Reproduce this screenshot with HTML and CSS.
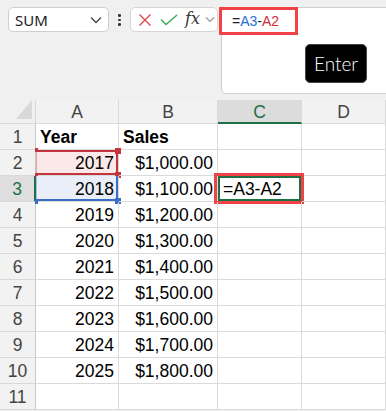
FILE: index.html
```html
<!DOCTYPE html>
<html lang="en">
<head>
  <meta charset="UTF-8" />
  <title>Formula bar</title>
  <link rel="stylesheet" href="styles.css">
</head>
<body>
  <header class="toolbar">
    <div class="name-box">
      <span>SUM</span>
      <svg width="12" height="8" viewBox="0 0 12 8"><path d="M1 1.5 L6 6.5 L11 1.5" fill="none" stroke="#444" stroke-width="1.3"/></svg>
    </div>
    <div class="dots"><i></i><i></i><i></i></div>
    <div class="fx-box">
      <svg width="14" height="14" viewBox="0 0 14 14"><path d="M1.5 1.5 L12.5 12.5 M12.5 1.5 L1.5 12.5" stroke="#e2474b" stroke-width="1.4"/></svg>
      <svg width="18" height="12" viewBox="0 0 18 12"><path d="M1 5.5 L6 10.5 L17 1" fill="none" stroke="#3fa857" stroke-width="1.5"/></svg>
      <span class="fx">fx</span>
      <svg width="10" height="7" viewBox="0 0 10 7"><path d="M1 1.5 L5 5.5 L9 1.5" fill="none" stroke="#999" stroke-width="1.2"/></svg>
    </div>
    <div class="formula-bar">
      <div class="formula">=<span class="ref-blue">A3</span>-<span class="ref-red">A2</span></div>
      <div class="enter">Enter</div>
      <div class="callout"></div>
    </div>
  </header>

  <section class="sheet">
    <div class="corner"></div>
    <div class="col-head">A</div>
    <div class="col-head">B</div>
    <div class="col-head active">C</div>
    <div class="col-head">D</div>
  </section>

  <script>
    const rows = [
      ['Year', 'Sales'],
      ['2017', '$1,000.00'],
      ['2018', '$1,100.00'],
      ['2019', '$1,200.00'],
      ['2020', '$1,300.00'],
      ['2021', '$1,400.00'],
      ['2022', '$1,500.00'],
      ['2023', '$1,600.00'],
      ['2024', '$1,700.00'],
      ['2025', '$1,800.00'],
      ['', '']
    ];

    const sheet = document.querySelector('.sheet');

    rows.forEach((row, i) => {
      const n = i + 1;
      const head = n === 1 ? 'cell bold' : 'cell num';
      let html = `<div class="row-head${n === 3 ? ' active' : ''}">${n}</div>`;
      let aClass = head;
      if (n === 2) aClass += ' ref-a2';
      if (n === 3) aClass += ' ref-a3';
      html += `<div class="${aClass}">${row[0]}${n === 2 || n === 3 ? '<b class="h tl"></b><b class="h tr"></b><b class="h bl"></b><b class="h br"></b>' : ''}</div>`;
      html += `<div class="${head}">${row[1]}</div>`;
      html += n === 3
        ? '<div class="cell current">=A3-A2<div class="callout"></div></div>'
        : '<div class="cell"></div>';
      html += '<div class="cell"></div>';
      sheet.insertAdjacentHTML('beforeend', html);
    });
  </script>
</body>
</html>
```

FILE: styles.css
```css
body {
  margin: 0;
  background-color: #f0f0f0;
  font-family: 'Liberation Sans', Arial, sans-serif;
  overflow: hidden;
}

.toolbar {
  display: flex;
  align-items: flex-start;
  height: 100px;
  padding: 7px 0 0 8px;
  box-sizing: border-box;
}

.name-box {
  display: flex;
  align-items: center;
  justify-content: space-between;
  width: 101px;
  height: 25px;
  padding: 0 6px 0 6px;
  box-sizing: border-box;
  background: white;
  border: 1px solid #cfcfcf;
  border-radius: 5px;
  font-family: 'Noto Sans', sans-serif;
  font-size: 15px;
  color: #222;
}

.dots {
  display: flex;
  flex-direction: column;
  gap: 2px;
  width: 21px;
  align-items: center;
  padding-top: 7px;
}

.dots i {
  width: 2.5px;
  height: 2.5px;
  background: #333;
  border-radius: 50%;
}

.fx-box {
  display: flex;
  align-items: center;
  gap: 8px;
  width: 88px;
  height: 25px;
  padding-left: 7px;
  box-sizing: border-box;
  background: white;
  border: 1px solid #d6d6d6;
  border-radius: 5px;
}

.fx {
  font-family: 'DejaVu Serif', 'Liberation Serif', serif;
  font-style: italic;
  font-size: 16px;
  color: #333;
  margin: -2px -3px 0 -1px;
}

.formula-bar {
  position: relative;
  flex: 1;
  height: 85px;
  margin-left: 3px;
  margin-right: -8px;
  background: white;
  border: 1px solid #cfcfcf;
  border-radius: 5px;
  display: flex;
  flex-direction: column;
}

.formula {
  padding: 5px 0 0 10px;
  font-size: 14px;
  color: #222;
  height: 31px;
  box-sizing: border-box;
}

.ref-blue { color: #1f6fd6; }
.ref-red { color: #d22c3c; }

.enter {
  align-self: flex-start;
  margin-left: 83px;
  margin-top: 5px;
  width: 62px;
  height: 39px;
  box-sizing: border-box;
  background: black;
  border: 1px solid #444;
  border-radius: 5px;
  color: white;
  font-family: Lato, sans-serif;
  font-weight: 300;
  font-size: 19px;
  line-height: 37px;
  text-align: center;
}

.formula-bar .callout {
  position: absolute;
  top: -1px;
  left: -3px;
  width: 79px;
  height: 28px;
  box-sizing: border-box;
  border: 3px solid #ef4347;
}

.sheet {
  display: grid;
  grid-template-columns: 36px 83px 99px 84px 84px;
  grid-template-rows: 24px repeat(11, 26px);
  background: white;
  font-size: 17.5px;
  line-height: 26px;
}

.sheet > div {
  box-sizing: border-box;
  border-right: 1px solid #dadada;
  border-bottom: 1px solid #dadada;
}

.corner {
  position: relative;
  background: #f0f0f0;
}

.corner::after {
  content: '';
  position: absolute;
  right: 3px;
  bottom: 4px;
  width: 16px;
  height: 19px;
  background: #d9d9d9;
  clip-path: polygon(100% 0, 100% 100%, 0 100%);
}

.col-head {
  background: #f2f2f2;
  color: #444;
  text-align: center;
  line-height: 24px;
}

.col-head.active {
  background: #dcdcdc;
  color: #1e7145;
  border-bottom: 2px solid #1e7145;
}

.row-head {
  background: #f2f2f2;
  color: #444;
  text-align: center;
  border-right-color: #c8c8c8 !important;
}

.row-head.active {
  background: #dedede;
  color: #1e7145;
  border-right: 2px solid #1e7145 !important;
}

.cell {
  position: relative;
  padding: 0 4px;
  white-space: nowrap;
  color: #000;
}

.cell.bold {
  font-weight: bold;
}

.cell.num {
  text-align: right;
}

.ref-a2 {
  background: #fbe9e9;
  box-shadow: inset 0 2px 0 #c3353e, inset -2px 0 0 #c3353e, inset 0 -2px 0 #c3353e, inset 1px 0 0 #e4a2a6;
}

.ref-a3 {
  background: #e9eef8;
  box-shadow: inset 0 -2px 0 #3b6fc6, inset -2px 0 0 #3b6fc6, inset 1px 0 0 #a9c0e6;
}

.h {
  position: absolute;
  width: 5px;
  height: 5px;
}

.ref-a2 .h { background: #c3353e; }
.ref-a3 .h { background: #3b6fc6; }

.h.tl { top: -2px; left: -1px; width: 3px; height: 4px; }
.h.tr { top: -2px; right: -3px; width: 6px; height: 6px; }
.h.bl { bottom: -3px; left: -1px; width: 3px; height: 5px; }
.h.br { bottom: -3px; right: -3px; width: 6px; height: 6px; }

.ref-a3 .h.tl, .ref-a3 .h.tr { display: none; }

.current {
  box-shadow: inset 0 0 0 2px #1e7145;
  padding-left: 5px;
}

.current .callout {
  position: absolute;
  top: -3px;
  left: -4px;
  right: -3px;
  bottom: -3px;
  border: 3px solid #ef4347;
}
```
